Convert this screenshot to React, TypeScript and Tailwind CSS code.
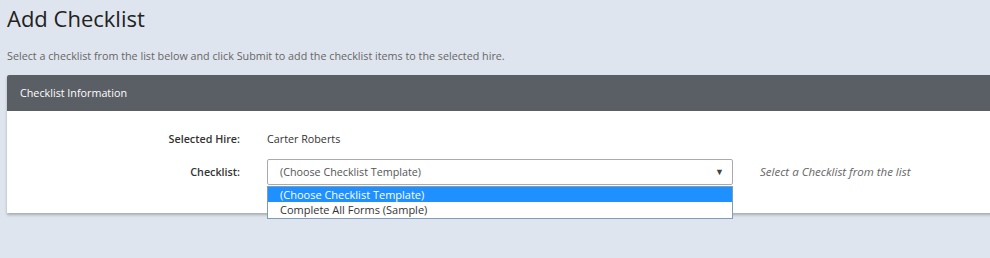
const App = () => {
  return (
    <div className="w-[990px] h-[258px] bg-[#dfe5ee] overflow-hidden font-['Open_Sans',sans-serif] text-[#333]">
      <div className="px-[7px] pt-[2px]">
        <h1 className="text-[22px] leading-[32px] font-normal text-[#222]">Add Checklist</h1>
        <p className="mt-[14px] text-[10.75px] leading-[16px] text-[#666]">
          Select a checklist from the list below and click Submit to add the checklist items to the selected hire.
        </p>

        <div className="mt-[11px] mr-[-20px] bg-white rounded-t-[2px] shadow-[0_2px_3px_rgba(0,0,0,0.25)]">
          <div className="h-[36px] bg-[#5a5e65] rounded-t-[2px] px-[13px] flex items-center">
            <span className="text-[10.75px] text-white">Checklist Information</span>
          </div>

          <div className="pt-[18px] pb-[28px]">
            <div className="flex items-center h-[20px]">
              <div className="w-[233px] text-right text-[10.75px] font-semibold text-[#333]">Selected Hire:</div>
              <div className="ml-[27px] text-[10.75px] text-[#333]">Carter Roberts</div>
            </div>

            <div className="flex items-center mt-[10px]">
              <div className="w-[233px] text-right text-[10.75px] font-semibold text-[#333]">Checklist:</div>
              <div className="ml-[27px] relative w-[466px]">
                <div className="h-[26px] border border-[#aaa] rounded-[2px] flex items-center justify-between pl-[12px] pr-[8px] text-[10.75px] text-[#555]">
                  <span>(Choose Checklist Template)</span>
                  <span className="text-[9px] text-[#444]">▼</span>
                </div>
                <div className="absolute left-0 top-[27px] w-full border border-[#7f9db9] bg-white text-[11px] z-10">
                  <div className="h-[15px] leading-[15px] bg-[#1e90ff] text-white pl-[12px]">(Choose Checklist Template)</div>
                  <div className="h-[16px] leading-[16px] text-[#333] pl-[12px]">Complete All Forms (Sample)</div>
                </div>
              </div>
              <div className="ml-[27px] text-[11.5px] italic text-[#666]">Select a Checklist from the list</div>
            </div>
          </div>
        </div>
      </div>
    </div>
  );
};

export default App;
